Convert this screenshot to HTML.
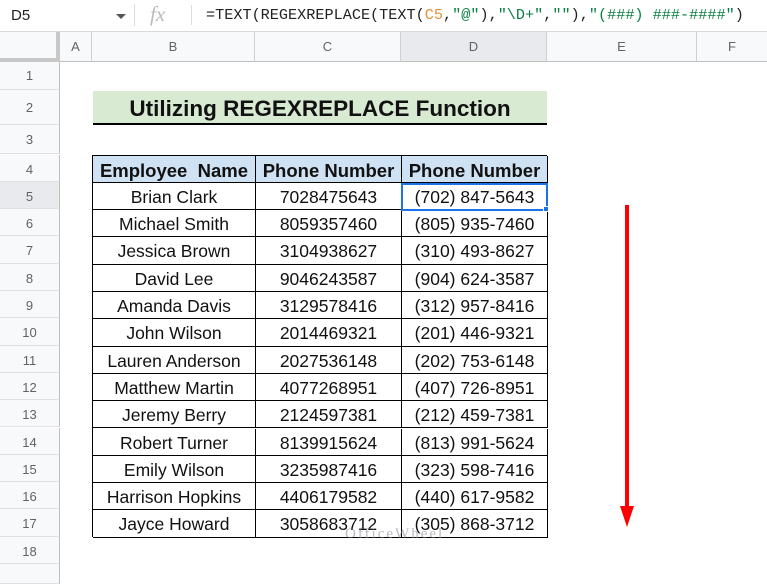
<!DOCTYPE html><html><head><style>
*{margin:0;padding:0;box-sizing:border-box}
body{width:767px;height:572px;overflow:hidden;background:#fff;font-family:"Liberation Sans",Arial,sans-serif;position:relative}
.a{position:absolute}
.rh{position:absolute;left:0;width:60px;background:#f8f9fa;border-bottom:1px solid #e0e0e0;border-right:1px solid #c0c0c0;color:#5f6368;font-size:13px;text-align:center}
.ch{position:absolute;top:32px;height:30px;line-height:30px;background:#f8f9fa;border-right:1px solid #d0d0d0;border-bottom:1px solid #c0c0c0;color:#5f6368;font-size:13px;text-align:center}
.c{position:absolute;border-right:1px solid #000;border-bottom:1px solid #000;text-align:center;font-size:17.5px;color:#111;white-space:nowrap}
</style></head><body>
<div class="a" style="left:0;top:0;width:767px;height:32px;border-bottom:1px solid #d8d8d8;background:#fff"></div>
<div class="a" style="left:11px;top:7px;font-size:15px;color:#222">D5</div>
<div class="a" style="left:116px;top:14px;width:0;height:0;border-left:5px solid transparent;border-right:5px solid transparent;border-top:5px solid #555"></div>
<div class="a" style="left:134px;top:4px;width:1px;height:22px;background:#ddd"></div>
<div class="a" style="left:150px;top:2px;font-family:'Liberation Serif',serif;font-style:italic;font-size:21px;color:#bbb">fx</div>
<div class="a" style="left:191px;top:5px;width:1px;height:20px;background:#ddd"></div>
<div class="a" style="left:206px;top:6px;font-family:'Liberation Mono',monospace;font-size:15.2px;color:#222;white-space:pre">=TEXT(REGEXREPLACE(TEXT(<span style="color:#e69138">C5</span>,<span style="color:#0b8043">"@"</span>),<span style="color:#0b8043">"\D+"</span>,<span style="color:#0b8043">""</span>),<span style="color:#0b8043">"(###) ###-####"</span>)</div>
<div class="a" style="left:0;top:32px;width:60px;height:30px;background:#f8f9fa;border-right:4px solid #c8c8c8;border-bottom:4px solid #c8c8c8"></div>
<div class="ch" style="left:60px;width:32px">A</div>
<div class="ch" style="left:92px;width:163px">B</div>
<div class="ch" style="left:255px;width:146px">C</div>
<div class="ch" style="left:401px;width:146px;background:#e8eaed">D</div>
<div class="ch" style="left:547px;width:150px">E</div>
<div class="ch" style="left:697px;width:70px;border-right:none">F</div>
<div class="rh" style="top:62px;height:28px;line-height:28px">1</div>
<div class="rh" style="top:90px;height:35px;line-height:35px">2</div>
<div class="rh" style="top:125px;height:29px;line-height:29px">3</div>
<div id="rows"></div>
<div class="a" style="left:93px;top:91px;width:454px;height:34px;background:#d9ead3;border-bottom:2px solid #000;text-align:center;font-weight:bold;font-size:22.5px;line-height:35px;color:#111;white-space:nowrap">Utilizing REGEXREPLACE Function</div>
<div id="tbl"></div>
<div class="a" style="left:401px;top:183px;width:147px;height:28px;border:2px solid #1a73e8"></div>
<div class="a" style="left:543px;top:206px;width:6px;height:6px;background:#1a73e8;border:1px solid #fff"></div>
<div class="a" style="left:625px;top:205px;width:4px;height:305px;background:#f00"></div>
<div class="a" style="left:620px;top:506px;width:0;height:0;border-left:7px solid transparent;border-right:7px solid transparent;border-top:21px solid #f00"></div>
<div class="a" style="left:345px;top:526px;font-size:15px;letter-spacing:2px;color:rgba(140,140,150,.6);font-family:'Liberation Serif',serif">OfficeWheel</div>
<script>
var names=["Brian Clark","Michael Smith","Jessica Brown","David Lee","Amanda Davis","John Wilson","Lauren Anderson","Matthew Martin","Jeremy Berry","Robert Turner","Emily Wilson","Harrison Hopkins","Jayce Howard"];
var ph=["7028475643","8059357460","3104938627","9046243587","3129578416","2014469321","2027536148","4077268951","2124597381","8139915624","3235987416","4406179582","3058683712"];
var h=27.3,t0=154.5,r="",tb="";
for(var i=0;i<15;i++){var y=t0+i*h;r+='<div class="rh" style="top:'+y+'px;height:'+h+'px;line-height:'+(h+2)+'px;'+(i==1?'background:#e8eaed;':'')+'">'+(i+4)+'</div>';}
r+='<div class="rh" style="top:'+(t0+15*h)+'px;height:20px"></div>';
document.getElementById("rows").outerHTML=r;
tb+='<div class="a" style="left:92px;top:'+t0+'px;width:455px;height:'+(14*h)+'px;border-left:1px solid #000;border-top:1px solid #000"></div>';
var X=[[93,163],[256,146],[402,146]];
for(var i=0;i<14;i++){var y=t0+1+i*h;
 var v=i==0?["Employee&nbsp; Name","Phone Number","Phone Number"]:[names[i-1],ph[i-1],"("+ph[i-1].slice(0,3)+") "+ph[i-1].slice(3,6)+"-"+ph[i-1].slice(6)];
 for(var j=0;j<3;j++){tb+='<div class="c" style="left:'+X[j][0]+'px;top:'+y+'px;width:'+X[j][1]+'px;height:'+h+'px;line-height:'+(h+2)+'px;'+(i==0?'background:#cfe2f3;font-weight:bold;font-size:18.5px;':'')+'">'+v[j]+'</div>';}}
document.getElementById("tbl").outerHTML=tb;
</script>
</body></html>
